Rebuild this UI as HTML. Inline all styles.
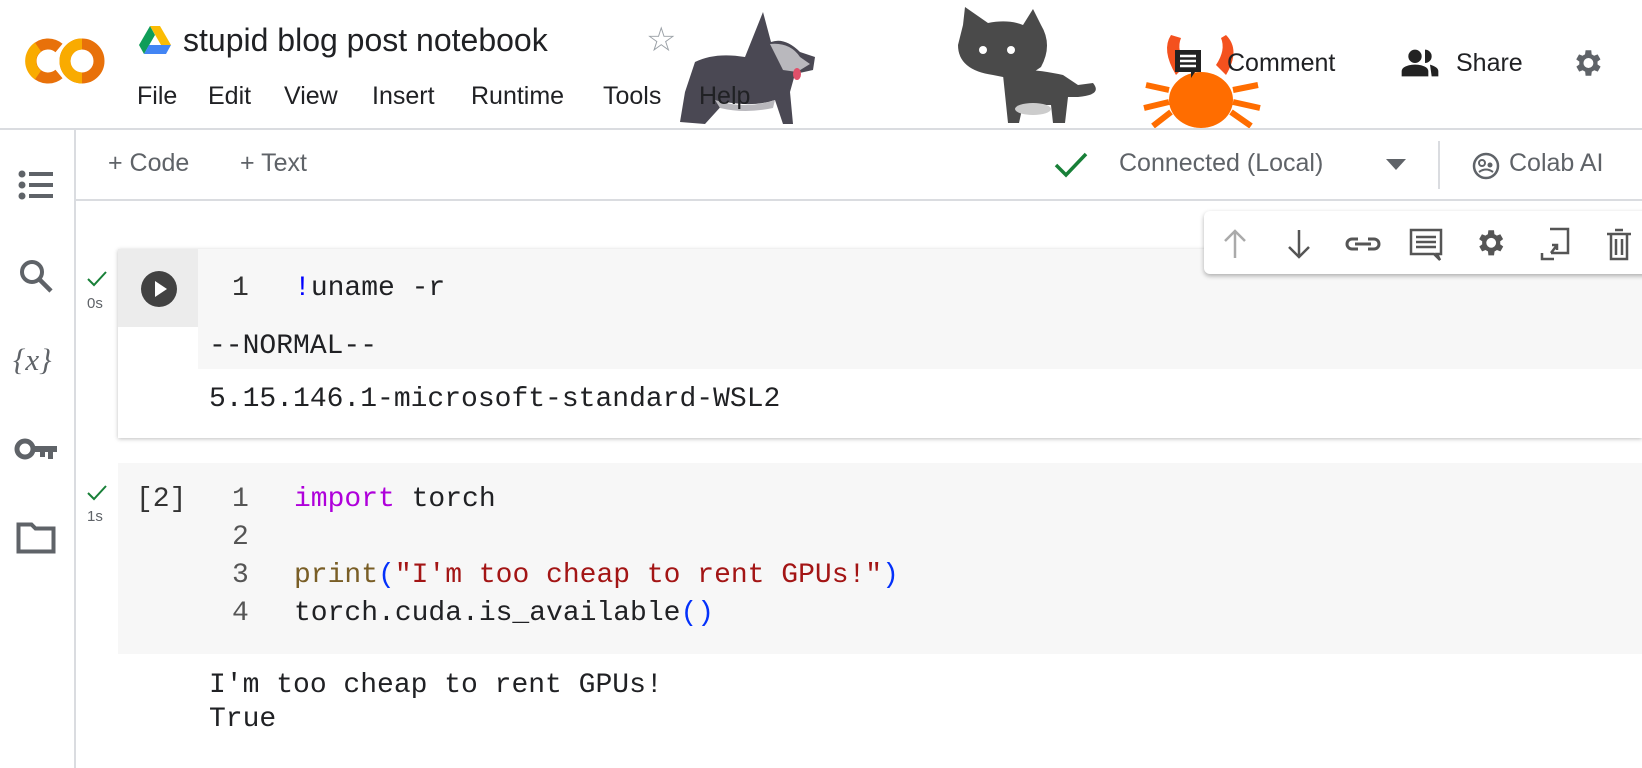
<!DOCTYPE html>
<html><head><meta charset="utf-8"><style>
*{margin:0;padding:0;box-sizing:border-box}
body{width:1642px;height:768px;background:#fff;position:relative;overflow:hidden;font-family:"Liberation Sans",sans-serif;color:#202124}
.a{position:absolute;white-space:pre}
.mono{font-family:"Liberation Mono",monospace;font-size:28px;line-height:38px}
.menu{font-size:25px;top:82px;color:#202124}
.gray{color:#5f6368}
svg{position:absolute}
</style></head><body>
<!-- logo -->
<svg style="left:22px;top:36px" width="84" height="50" viewBox="0 0 84 50">
<path d="M37 12 A17 17 0 1 0 37 38" fill="none" stroke="#e8710a" stroke-width="11"/>
<path d="M16 11 A17 17 0 0 0 16 39" fill="none" stroke="#f9ab00" stroke-width="11"/>
<circle cx="60" cy="25" r="17" fill="none" stroke="#e8710a" stroke-width="11"/>
<path d="M60 8 A17 17 0 0 0 60 42" fill="none" stroke="#f9ab00" stroke-width="11"/>
</svg>
<!-- drive -->
<svg style="left:139px;top:26px" width="32" height="28" viewBox="0 0 32 28">
<path d="M11 0h10l11 19h-10z" fill="#fbbc04"/><path d="M11 0L0 19l5 9 11-19z" fill="#0f9d58"/><path d="M5 28h22l5-9H10z" fill="#4285f4"/></svg>
<div class="a" style="left:183px;top:22px;font-size:32px">stupid blog post notebook</div>
<div class="a" style="left:646px;top:20px;font-size:34px;color:#9aa0a6">☆</div>
<div class="a menu" style="left:137px">File</div>
<div class="a menu" style="left:208px">Edit</div>
<div class="a menu" style="left:284px">View</div>
<div class="a menu" style="left:372px">Insert</div>
<div class="a menu" style="left:471px">Runtime</div>
<div class="a menu" style="left:603px">Tools</div>
<!-- dog -->
<svg style="left:675px;top:12px" width="145" height="118" viewBox="0 0 145 118">
<path d="M20 50 Q40 40 70 45 L80 20 L88 0 L96 30 Q110 25 125 40 L140 45 L138 58 L120 62 L115 80 L118 112 L108 112 L100 88 Q80 95 50 90 L30 112 L5 110 L10 80 Z" fill="#4a4853"/>
<path d="M95 32 Q115 30 125 45 L135 52 L122 60 L108 58Z" fill="#b9b8bd"/>
<path d="M40 88 Q70 98 100 88 L98 96 Q70 102 45 96Z" fill="#b9b8bd"/>
<ellipse cx="122" cy="62" rx="4" ry="6" fill="#e0506a"/></svg>
<div class="a menu" style="left:699px">Help</div>
<!-- cat -->
<svg style="left:953px;top:5px" width="146" height="120" viewBox="0 0 146 120">
<path d="M10 20 L12 2 L35 18 Q55 14 70 20 L80 4 L88 20 Q100 40 88 62 Q75 72 60 74 L40 70 Q5 65 5 40Z" fill="#4a4a4a"/>
<path d="M50 70 Q65 60 110 70 L125 80 L140 78 Q150 90 125 92 L115 92 L112 118 L100 118 L98 100 L70 100 L66 118 L55 118 Z" fill="#4a4a4a"/>
<ellipse cx="80" cy="104" rx="18" ry="6" fill="#ccc"/>
<circle cx="30" cy="45" r="4" fill="#fff"/><circle cx="58" cy="45" r="4" fill="#fff"/></svg>
<!-- crab -->
<svg style="left:1141px;top:30px" width="122" height="100" viewBox="0 0 122 100">
<path d="M30 5 Q20 20 35 45 L45 35 Q35 20 40 8Z M85 5 Q100 20 85 45 L75 35 Q85 20 80 8Z" fill="#f4511e"/>
<ellipse cx="60" cy="70" rx="32" ry="28" fill="#ff6d00"/>
<path d="M28 60 L5 55 M28 72 L3 78 M30 82 L12 96 M92 60 L117 55 M92 72 L119 78 M90 82 L110 96" stroke="#ff6d00" stroke-width="6"/></svg>
<!-- comment -->
<svg style="left:1173px;top:48px" width="30" height="32" viewBox="0 0 30 32"><path d="M2 2h26v22h-6l-4 6v-6H2z" fill="#222"/><path d="M7 8h16M7 13h16M7 18h16" stroke="#fff" stroke-width="2.5"/></svg>
<div class="a" style="left:1227px;top:49px;font-size:25px">Comment</div>
<svg style="left:1400px;top:48px" width="40" height="30" viewBox="0 0 24 18"><circle cx="9" cy="5" r="4" fill="#222"/><path d="M1 17v-3c0-3 5-4 8-4s8 1 8 4v3z" fill="#222"/><path d="M15 1a4 4 0 0 1 0 8M18 10c3 1 5 2 5 4v3h-4" fill="#222"/></svg>
<div class="a" style="left:1456px;top:49px;font-size:25px">Share</div>
<svg style="left:1570px;top:46px" width="34" height="34" viewBox="0 0 24 24"><path fill="#5f6368" d="M19.4 13a7.5 7.5 0 0 0 0-2l2.1-1.6-2-3.5-2.5 1a7 7 0 0 0-1.7-1L15 3h-4l-.4 2.9a7 7 0 0 0-1.7 1l-2.5-1-2 3.5L6.6 11a7.5 7.5 0 0 0 0 2l-2.1 1.6 2 3.5 2.5-1a7 7 0 0 0 1.7 1L11 21h4l.4-2.9a7 7 0 0 0 1.7-1l2.5 1 2-3.5zM13 15.5a3.5 3.5 0 1 1 0-7 3.5 3.5 0 0 1 0 7z"/></svg>
<div class="a" style="left:0;top:128px;width:1642px;height:2px;background:#dadce0"></div>
<!-- sidebar -->
<div class="a" style="left:74px;top:130px;width:2px;height:638px;background:#dadce0"></div>
<svg style="left:18px;top:170px" width="36" height="30" viewBox="0 0 36 30"><g fill="#5f6368"><circle cx="4" cy="4" r="3.5"/><circle cx="4" cy="15" r="3.5"/><circle cx="4" cy="26" r="3.5"/><rect x="11" y="2" width="24" height="4"/><rect x="11" y="13" width="24" height="4"/><rect x="11" y="24" width="24" height="4"/></g></svg>
<svg style="left:18px;top:258px" width="36" height="36" viewBox="0 0 36 36"><circle cx="14" cy="14" r="10" fill="none" stroke="#5f6368" stroke-width="4"/><path d="M21 21l12 12" stroke="#5f6368" stroke-width="4.5"/></svg>
<div class="a" style="left:13px;top:342px;font-size:31px;color:#5f6368;font-family:'Liberation Serif',serif;font-style:italic">{<span>x</span>}</div>
<svg style="left:14px;top:436px" width="44" height="28" viewBox="0 0 44 28"><circle cx="11" cy="13" r="8" fill="none" stroke="#5f6368" stroke-width="5"/><path d="M18 10h25v6h-4v7h-5v-7h-3v5h-5v-5h-8z" fill="#5f6368"/></svg>
<svg style="left:16px;top:522px" width="40" height="32" viewBox="0 0 40 32"><path d="M2.5 2.5h13l4 4h18v23h-35z" fill="none" stroke="#5f6368" stroke-width="4"/></svg>
<!-- toolbar -->
<div class="a gray" style="left:108px;top:149px;font-size:25px">+ Code</div>
<div class="a gray" style="left:240px;top:149px;font-size:25px">+ Text</div>
<svg style="left:1053px;top:150px" width="36" height="30" viewBox="0 0 36 30"><path d="M3 15l10 10L33 4" fill="none" stroke="#188038" stroke-width="3.5"/></svg>
<div class="a gray" style="left:1119px;top:149px;font-size:25px">Connected (Local)</div>
<svg style="left:1384px;top:157px" width="24" height="14"><path d="M2 2h20L12 13z" fill="#5f6368"/></svg>
<div class="a" style="left:1438px;top:141px;width:2px;height:48px;background:#dadce0"></div>
<svg style="left:1472px;top:152px" width="28" height="28" viewBox="0 0 28 28"><circle cx="14" cy="14" r="12" fill="none" stroke="#5f6368" stroke-width="2.5"/><circle cx="10" cy="11" r="3" fill="none" stroke="#5f6368" stroke-width="2"/><circle cx="18" cy="13" r="2.5" fill="#5f6368"/><path d="M7 20q7-5 14 0" stroke="#5f6368" stroke-width="2" fill="none"/></svg>
<div class="a gray" style="left:1509px;top:149px;font-size:25px">Colab AI</div>
<div class="a" style="left:76px;top:199px;width:1566px;height:2px;background:#dadce0"></div>
<!-- cell 1 -->
<div class="a" style="left:118px;top:249px;width:1524px;height:189px;background:#fff;box-shadow:0 1px 4px rgba(0,0,0,.25)"></div>
<div class="a" style="left:118px;top:249px;width:80px;height:78px;background:#ececec"></div>
<div class="a" style="left:198px;top:249px;width:1444px;height:120px;background:#f7f7f7"></div>
<svg style="left:140px;top:270px" width="38" height="38" viewBox="0 0 38 38"><circle cx="19" cy="19" r="18" fill="#424242"/><path d="M15 11l12 8-12 8z" fill="#fff"/></svg>
<svg style="left:86px;top:270px" width="22" height="18"><path d="M2 9l6 6L20 2" fill="none" stroke="#188038" stroke-width="2"/></svg>
<div class="a" style="left:87px;top:295px;font-size:15px;color:#5f6368">0s</div>
<div class="a mono" style="left:232px;top:270px;color:#333">1</div>
<div class="a mono" style="left:294px;top:270px"><span style="color:#0000ff">!</span>uname -r</div>
<div class="a mono" style="left:209px;top:328px">--NORMAL--</div>
<div class="a mono" style="left:209px;top:381px">5.15.146.1-microsoft-standard-WSL2</div>
<!-- cell toolbar -->
<div class="a" style="left:1204px;top:211px;width:450px;height:63px;background:#fff;border-radius:6px;box-shadow:0 2px 5px rgba(0,0,0,.3)"></div>
<svg style="left:1220px;top:224px" width="420" height="40" viewBox="0 0 420 40">
<g fill="none" stroke-width="2.5">
<path d="M15 34V7M5 17L15 7l10 10" stroke="#aaa"/>
<path d="M79 6v27M69 23l10 10 10-10" stroke="#555"/>
<path d="M138 15h-6a5 5 0 0 0 0 10h6M148 15h6a5 5 0 0 1 0 10h-6M135 20h16" stroke="#555" stroke-width="3"/>
<path d="M127 6h30v24h-4l3 6-6-6h-23z M132 13h20M132 18h20M132 23h20" stroke="#555" transform="translate(64 0)"/>
<path d="M322 29v6h12" stroke="#555"/>
<path d="M330 5h18v24h-17M331 29l6-8M332 21h5v5" stroke="#555"/>
<path d="M391 10v25h16V10M387 10h24M395 6h8M396 15v16M402 15v16" stroke="#555"/>
</g>
<path transform="translate(253 2) scale(1.4)" fill="#555" d="M19.4 13a7.5 7.5 0 0 0 0-2l2.1-1.6-2-3.5-2.5 1a7 7 0 0 0-1.7-1L15 3h-4l-.4 2.9a7 7 0 0 0-1.7 1l-2.5-1-2 3.5L6.6 11a7.5 7.5 0 0 0 0 2l-2.1 1.6 2 3.5 2.5-1a7 7 0 0 0 1.7 1L11 21h4l.4-2.9a7 7 0 0 0 1.7-1l2.5 1 2-3.5zM13 15.5a3.5 3.5 0 1 1 0-7 3.5 3.5 0 0 1 0 7z"/>
</svg>
<!-- cell 2 -->
<div class="a" style="left:118px;top:463px;width:1524px;height:191px;background:#f7f7f7"></div>
<svg style="left:86px;top:484px" width="22" height="18"><path d="M2 9l6 6L20 2" fill="none" stroke="#188038" stroke-width="2"/></svg>
<div class="a" style="left:87px;top:508px;font-size:15px;color:#5f6368">1s</div>
<div class="a mono" style="left:136px;top:481px;color:#333">[2]</div>
<div class="a mono" style="left:232px;top:481px;color:#555">1
2
3
4</div>
<div class="a mono" style="left:294px;top:481px"><span style="color:#af00db">import</span> torch

<span style="color:#795e26">print</span><span style="color:#0431fa">(</span><span style="color:#a31515">"I'm too cheap to rent GPUs!"</span><span style="color:#0431fa">)</span>
torch.cuda.is_available<span style="color:#0431fa">()</span></div>
<div class="a mono" style="left:209px;top:669px;line-height:34px">I'm too cheap to rent GPUs!
True</div>
</body></html>
